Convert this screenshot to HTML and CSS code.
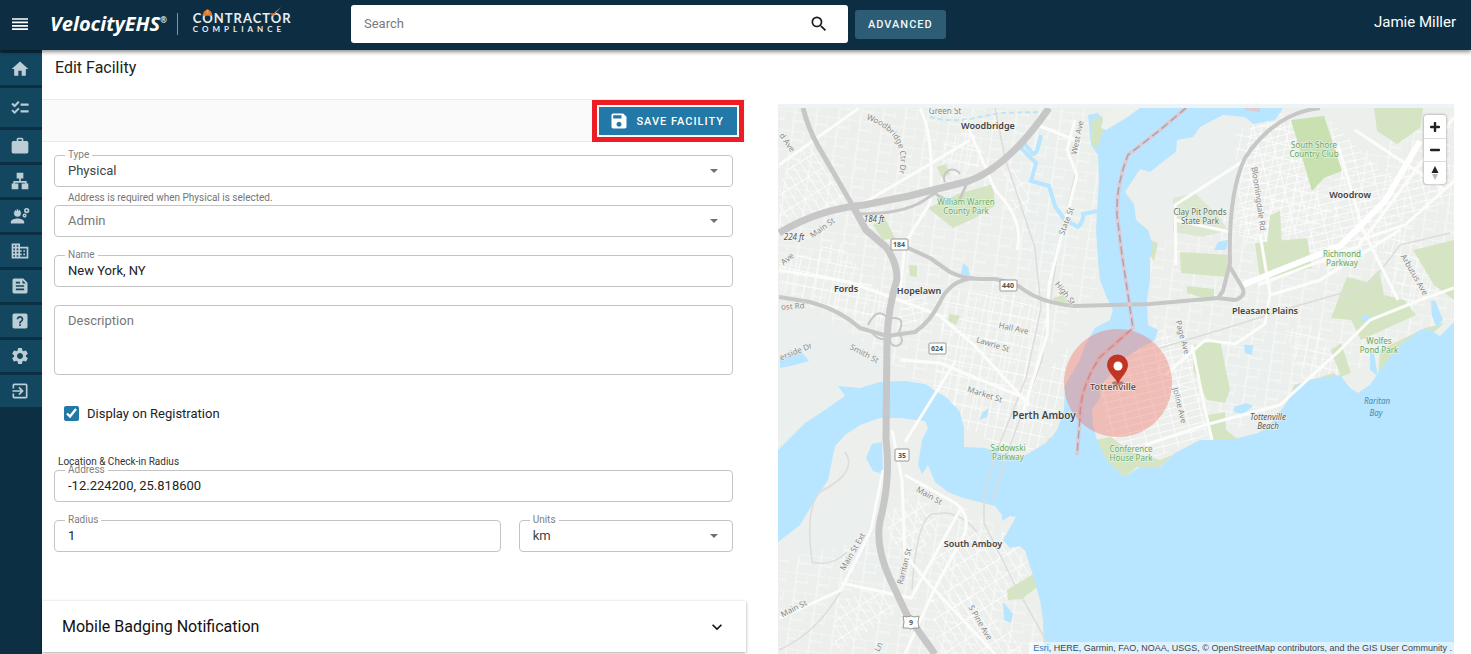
FILE: index.html
```html
<!DOCTYPE html>
<html lang="en">
<head>
<meta charset="utf-8">
<meta name="viewport" content="width=device-width, initial-scale=1">
<title>Edit Facility</title>
<link rel="stylesheet" href="styles.css">
</head>
<body>
<header class="topbar">
  <div class="brand">
    <button class="menu-button" type="button" aria-label="Menu">
      <svg width="16" height="12" viewBox="0 0 16 12"><path d="M0 1h16M0 4.400h16M0 7.800h16M0 11.200h16" stroke="#fff" stroke-width="1.700"/></svg>
    </button>
    <span class="logo">VelocityEHS<sup class="logo-mark">®</sup></span>
    <span class="logo-divider"></span>
    <span class="product">
      <span class="product-name">CONTRACTOR</span>
      <span class="product-sub">COMPLIANCE</span>
      <svg class="product-art" viewBox="0 0 96 24" aria-hidden="true">
        <path d="M10 7.500a4.500 4.500 0 0 1 9 0l1 1.200H9z" fill="#e07b2c"/><path d="M13.500 2.500h2v4h-2z" fill="#f19a4c"/>
        <path d="M77 6l3 3.500L88 0l-7.600 6.500z" fill="#e07b2c"/>
      </svg>
    </span>
  </div>
  <form class="search" role="search">
    <input class="search-input" type="search" placeholder="Search" aria-label="Search">
    <button class="search-button" type="button" aria-label="Search">
      <svg width="20" height="20" viewBox="0 0 24 24"><path fill="#1b1b1b" d="M15.500 14h-.790l-.280-.270A6.470 6.470 0 0 0 16 9.500 6.500 6.500 0 1 0 9.500 16c1.610 0 3.090-.590 4.230-1.570l.270.280v.790l5 4.990L20.490 19zm-6 0C7.010 14 5 11.990 5 9.500S7.010 5 9.500 5 14 7.010 14 9.500 11.990 14 9.500 14"/></svg>
    </button>
  </form>
  <button class="advanced" type="button">ADVANCED</button>
  <span class="user">Jamie Miller</span>
</header>

<div class="shell">
  <nav class="sidebar" aria-label="Main">
    <a class="nav-item" href="#home" aria-label="Home"><svg viewBox="0 0 24 24"><path d="M10 20v-6h4v6h5v-8h3L12 3 2 12h3v8z"/></svg></a>
    <a class="nav-item nav-item-tall" href="#tasks" aria-label="Tasks"><svg viewBox="0 0 24 24"><path d="M22 7h-9v2h9zm0 8h-9v2h9zM5.540 11 2 7.460l1.410-1.410 2.120 2.120 4.240-4.240 1.410 1.410zm0 8L2 15.460l1.410-1.410 2.120 2.120 4.240-4.240 1.410 1.410z" stroke="#bccdd6" stroke-width=".6"/></svg></a>
    <a class="nav-item" href="#work" aria-label="Work"><svg viewBox="0 0 24 24"><path d="M20 6h-4V4c0-1.110-.890-2-2-2h-4c-1.110 0-2 .890-2 2v2H4c-1.110 0-2 .890-2 2v11c0 1.110.890 2 2 2h16c1.110 0 2-.890 2-2V8c0-1.110-.890-2-2-2m-6 0h-4V4h4z"/></svg></a>
    <a class="nav-item" href="#structure" aria-label="Structure"><svg viewBox="0 0 24 24"><path d="M8 2h8v7h-3v3h7v3h2v7h-8v-7h4v-1H6v1h4v7H2v-7h2v-3h7V9H8z"/></svg></a>
    <a class="nav-item" href="#workers" aria-label="Workers"><svg viewBox="0 0 24 24"><path d="M9 15c-2.670 0-8 1.340-8 4v2h16v-2c0-2.660-5.330-4-8-4M4.740 9H5a4 4 0 0 0 8 0h.260c.270 0 .490-.220.490-.490v-.020c0-.270-.220-.490-.490-.490H13c0-1.480-.810-2.750-2-3.450v.950a.5.5 0 0 1-1 0V4.140a4 4 0 0 0-2 0V5.500a.5.5 0 0 1-1 0v-.950A3.980 3.980 0 0 0 5 8h-.260c-.270 0-.490.220-.490.490v.030c0 .260.220.480.490.480"/><circle cx="20" cy="5.500" r="2.200" fill="none" stroke="#bccdd6" stroke-width="2"/><circle cx="17.500" cy="11.500" r="1.600" fill="none" stroke="#bccdd6" stroke-width="1.700"/></svg></a>
    <a class="nav-item" href="#facilities" aria-label="Facilities"><svg viewBox="0 0 24 24"><path d="M12 7V3H2v18h20V7zM6 19H4v-2h2zm0-4H4v-2h2zm0-4H4V9h2zm0-4H4V5h2zm4 12H8v-2h2zm0-4H8v-2h2zm0-4H8V9h2zm0-4H8V5h2zm10 12h-8v-2h2v-2h-2v-2h2v-2h-2V9h8zm-2-8h-2v2h2zm0 4h-2v2h2z"/></svg></a>
    <a class="nav-item" href="#documents" aria-label="Documents"><svg viewBox="0 0 24 24"><path d="M16 3H5c-1.100 0-2 .9-2 2v14c0 1.100.9 2 2 2h14c1.100 0 2-.9 2-2V8zM7 7h5v2H7zm10 10H7v-2h10zm0-4H7v-2h10zm-2-4V5l4 4z"/></svg></a>
    <a class="nav-item" href="#help" aria-label="Help"><svg viewBox="0 0 24 24"><path d="M19 3H5c-1.100 0-2 .9-2 2v14c0 1.100.9 2 2 2h14c1.100 0 2-.9 2-2V5c0-1.100-.9-2-2-2m-6 15h-2v-2h2zm0-3h-2c0-3.250 3-3 3-5 0-1.100-.9-2-2-2s-2 .9-2 2H8c0-2.210 1.790-4 4-4s4 1.790 4 4c0 2.500-3 2.750-3 5"/></svg></a>
    <a class="nav-item" href="#settings" aria-label="Settings"><svg viewBox="0 0 24 24"><path d="M19.140 12.940c.040-.3.060-.610.060-.940s-.020-.640-.070-.940l2.030-1.580c.180-.140.230-.410.120-.610l-1.920-3.320c-.120-.220-.370-.290-.590-.220l-2.390.960c-.5-.380-1.030-.7-1.620-.940L14.400 2.810c-.040-.240-.240-.410-.480-.410h-3.840c-.240 0-.430.170-.470.410l-.360 2.540c-.590.240-1.130.570-1.620.940l-2.390-.960c-.220-.080-.470 0-.590.220L2.740 8.870c-.120.210-.080.470.120.610l2.030 1.580c-.050.3-.090.630-.090.940s.020.640.070.940l-2.030 1.580c-.180.140-.230.410-.120.610l1.920 3.320c.120.220.370.290.590.220l2.390-.960c.5.380 1.030.7 1.620.940l.360 2.540c.050.240.240.410.480.410h3.840c.240 0 .440-.170.470-.410l.360-2.540c.590-.240 1.130-.560 1.620-.940l2.390.960c.220.080.470 0 .590-.220l1.920-3.320c.120-.220.070-.470-.120-.610zM12 15.600c-1.980 0-3.600-1.620-3.600-3.600s1.620-3.600 3.600-3.600 3.600 1.620 3.600 3.600-1.620 3.600-3.600 3.600"/></svg></a>
    <a class="nav-item" href="#exit" aria-label="Sign out"><svg viewBox="0 0 24 24"><path d="M10.090 15.590 11.500 17l5-5-5-5-1.410 1.410L12.670 11H3v2h9.670zM19 3H5a2 2 0 0 0-2 2v4h2V5h14v14H5v-4H3v4a2 2 0 0 0 2 2h14c1.100 0 2-.9 2-2V5c0-1.100-.9-2-2-2"/></svg></a>
  </nav>

  <main class="content">
    <h1 class="page-title">Edit Facility</h1>
    <div class="columns">
      <section class="editor">
        <div class="toolbar">
          <div class="highlight">
            <button class="save" type="submit" form="facility">
              <svg width="20" height="20" viewBox="0 0 24 24"><path fill="#fff" d="M17 3H5a2 2 0 0 0-2 2v14a2 2 0 0 0 2 2h14c1.100 0 2-.9 2-2V7zm-5 16c-1.660 0-3-1.340-3-3s1.340-3 3-3 3 1.340 3 3-1.340 3-3 3m3-10H5V5h10z"/></svg>
              SAVE FACILITY
            </button>
          </div>
        </div>
        <form class="form" id="facility">
          <div class="field field-select">
            <select class="control" id="type"><option>Physical</option></select>
            <label class="label" for="type">Type</label>
            <span class="hint">Address is required when Physical is selected.</span>
          </div>
          <div class="field field-select">
            <select class="control control-empty" aria-label="Admin"><option>Admin</option></select>
          </div>
          <div class="field">
            <input class="control" id="name" type="text" value="New York, NY">
            <label class="label" for="name">Name</label>
          </div>
          <div class="field">
            <textarea class="control control-area" placeholder="Description" aria-label="Description"></textarea>
          </div>
          <label class="check"><input class="check-box" type="checkbox" checked>Display on Registration</label>
          <p class="group-title">Location &amp; Check-in Radius</p>
          <div class="field">
            <input class="control" id="address" type="text" value="-12.224200, 25.818600">
            <label class="label label-clear" for="address">Address</label>
          </div>
          <div class="field-row">
            <div class="field">
              <input class="control" id="radius" type="text" value="1">
              <label class="label" for="radius">Radius</label>
            </div>
            <div class="field field-select">
              <select class="control" id="units"><option>km</option></select>
              <label class="label" for="units">Units</label>
            </div>
          </div>
        </form>
        <button class="accordion" type="button">Mobile Badging Notification
          <svg width="20" height="20" viewBox="0 0 24 24"><path fill="#111" d="M7.410 8.580 12 13.170l4.590-4.590L18 10l-6 6-6-6z"/></svg>
        </button>
      </section>

      <section class="map" aria-label="Facility map">
        <svg class="map-canvas" viewBox="778 108 676 546" preserveAspectRatio="xMidYMid slice">
          <defs>
            <pattern id="g1" width="9" height="14" patternUnits="userSpaceOnUse" patternTransform="rotate(12)"><path d="M0 0h9M0 0v14" stroke="#fff" stroke-width="1.300" fill="none"/></pattern>
            <pattern id="g2" width="15" height="7" patternUnits="userSpaceOnUse" patternTransform="rotate(-14)"><path d="M0 0h15M0 0v7" stroke="#fff" stroke-width="1.400" fill="none"/></pattern>
            <pattern id="g3" width="8" height="17" patternUnits="userSpaceOnUse" patternTransform="rotate(-32)"><path d="M0 0h8M0 0v17" stroke="#fff" stroke-width="1.300" fill="none"/></pattern>
            <pattern id="g4" width="22" height="19" patternUnits="userSpaceOnUse" patternTransform="rotate(8)"><path d="M0 0h22M0 0v12M11 0v19M11 9h11" stroke="#fafbf9" stroke-width="1" fill="none"/></pattern>
          </defs>
          <rect x="778" y="108" width="676" height="546" fill="#ecefec"/>
          <g fill="#ebf0ee">
            <path d="M1016 125l26-8 20 40 8 100-25 20-28-20z"/><path d="M779 310l60 15 45 20-3 38-40 15-62 50z"/><path d="M1128 195l50-55 70-20 8 20-22 60-1 40-80-20z"/><path d="M1218 340l60-15 10 60-30 40-34 12z"/><path d="M790 530l90-70-5 80 10 40-95-10z"/>
          </g>

          <g fill="url(#g4)">
            <path d="M778 108h320v180l-50 60-20 80-90-30-80-60-80-50z"/><path d="M1150 250l305-140v210l-160 80-60 30-80-60z"/><path d="M779 560l90-20 50-60 100 60 25 114H779z"/>
          </g>
          <path d="M940 145l30-18 20 35-35 14zM870 285l20 8-2 30-50-10-58-22v-30l60-20z" fill="url(#g1)"/>
          <path d="M779 180l30-35 40 60-30 8-40 18zM1000 165l22 8 12 40-20-6z" fill="url(#g3)"/>
          <path d="M935 290l80 5 35 20-12 85-30 50-80-40 15-70zM1020 405l50-60-6 60-26 45-40 4z" fill="url(#g1)"/>
          <path d="M910 290l20 10-15 28-20-3z" fill="url(#g2)"/>
          <path d="M1250 120l40-8 25 80 80-20-10 70-50 30-70-20-30-30zM1330 120l60 60 60-40v60l-70 30-45-20z" fill="url(#g2)"/>
          <path d="M1235 130l60-12 20 80 25 20-100 30z" fill="url(#g1)"/>
          <path d="M1100 385l55-60 35 20 18 90-30 12-40 20-30-25z" fill="url(#g2)"/>
          <path d="M1285 330l30-5 20 30 3 20-35 5zM1380 240l30-15 30 65-35 15z" fill="url(#g1)"/>
          <path d="M930 560l40-30 55 20 7 25-30 30-40 30z" fill="url(#g3)"/>
          <path d="M835 600l50-10 15 20-65 44zM885 510l40-10 15 25-25 35-25-20zM930 600l40-10 60 64h-90z" fill="url(#g3)"/>

          <g fill="#d5e5c3">
            <path d="M1374 108h49l-3 20-23 16-20-13z"/><path d="M1291 120l33-4 18 55-18 7-12 13z" fill="#c9e1b1"/>
            <path d="M928 208l30-14 35-10 2 22-20 12-22 10z"/><path d="M937 167l9-3 4 10-8 4z"/><path d="M873 225l12-7 10 20-12 2z"/>
            <path d="M1173 198l22-5 25 25 8 12-25 7-30-5z" fill="#dde8d3"/><path d="M1180 252l50 3-5 22-44-4z"/><path d="M1187 286l27 3v12l-27-8z"/><path d="M1255 243l52-5 5 30-52 12z"/><path d="M1270 215l10-4 2 35-15-2z"/>
            <path d="M1347 277l20 5 12-12 5 25 20 5 12 15-55 25-10-20-20-2z"/><path d="M1413 250l41-10v60l-20-15z"/><path d="M1194 345l26-5 10 50-5 13-18-3-14-30z"/><path d="M1208 415l17-3 1 18 13 10-28 2z"/><path d="M1095 440l16-3 20 15 29 8 15-6-16 13-22 0-12 10-14-10z"/>
            <path d="M1294 385l40-12 8 8-30 3-20 8z"/><path d="M1331 350l10-7 10 30-10 4z"/><path d="M1380 350l45-22 20-5-15 12-40 30-12 15z"/><path d="M1007 590l28-17 2 14-15 12-14 1z"/><path d="M909 265l8 1v11l-7-1z"/><path d="M949 314l11 2-4 9-8-4z"/><path d="M1053 298l10-3 6 8-15-1z"/><path d="M1150 240l8 3-4 18-6-8z"/><path d="M1030 452l16-8 3-6 4-1-3 8-15 10z"/>
          </g>

          <g fill="#b8e5ff">
            <path d="M1088 115L1098 113 1107 125 1130 113 1140 108 1283 108 1275 120 1253 124 1245 117 1223 115 1200 127 1193 137 1177 140 1176 152 1165 160 1150 172 1140 169 1125 192 1134 204 1136 220 1148 230 1153 246 1150 258 1150 280 1147 300 1148 325 1158 330 1155 340 1140 348 1125 358 1115 370 1101 385 1100 398 1092 410 1093 425 1097 440 1104 455 1113 467 1125 477 1132 472 1140 467 1160 467 1175 453 1200 440 1230 440 1258 433 1268 427 1285 405 1297 385 1310 380 1340 375 1350 388 1358 393 1370 385 1380 370 1400 345 1420 330 1430 330 1440 336 1454 322 1454 654 1044 654 1043 620 1040 600 1033 575 1025 551 1020 546 1010 548 1003 540 1016 517 1010 516 1002 521 1002 515 995 506 980 502 963 498 948 492 935 482 928 465 922 474 918 465 922 440 928 428 925 421 900 418 880 418 860 425 845 435 835 446 828 480 815 500 800 525 778 542 778 450 790 438 805 423 825 410 845 396 838 386 860 388 880 382 905 381 925 384 947 398 960 412 964 428 964 447 985 448 1000 453 1020 458 1035 450 1050 440 1057 430 1064 410 1065 385 1080 360 1085 345 1095 328 1110 320 1113 310 1107 298 1100 280 1098 260 1096 230 1099 180 1098 155 1091 145z"/>
            <path d="M872 444l10-2 1 32-10-3-7-13z"/><path d="M963 263l5 4 2 9-9-2z"/><path d="M983 412l6-4-2 9-8 3z"/><path d="M780 356l20-6 9 11-14 4-15 3zM1003 602l10 12-2 9-7-3z"/><path d="M1244 345h9l-1 10-7-2zM1234 407l12-4 7 3-10 8-9-2zM1431 301l4-1 8 20-6 8-5-12zM1370 350l4 4 4 22-8-6zM1218 242l10-2-2 10-12 0zM1361 315l8 1 3 5-9 1z"/>
          </g>
          <path d="M1092 120l10-4 2 14-8 20-5-10z" fill="#d5e5c3"/>
          <path d="M1112 108h28l-14 10-20 12-5-2 3-12z" fill="#eef1ec"/>
          <path d="M1041 135q-4 20-8 19l-9-11-3 5 15 15-5 18 18 5 6 20 9 13 14 8q6-6 5-13l14-3" fill="none" stroke="#b8e5ff" stroke-width="4"/>
          <path d="M930 117q20 5 40 2l30-6 40-1" fill="none" stroke="#bde5f3" stroke-width="2" stroke-dasharray="5 3"/>

          <g fill="none" stroke="#dedcda" stroke-width="1.500">
            <path d="M995 108l10 50 30 90 6 60-15 70-30 75-12 40v30l30 60 40 72"/><path d="M1075 175l-18 80-15 105-30 80-20 60"/><path d="M1160 348l60-18 80-25 70-20 30-40 50-12"/><path d="M845 452q14 20-25 40-15 15-8 70 20 5 35-10M779 650q45-20 70-75M912 590q5-80 25-76 20-5 40 18"/>
          </g>
          <g fill="none" stroke="#fcfdfb" stroke-width="3">
            <path d="M920 108q15 30 10 95l-25 40-5 50"/><path d="M779 165l80-57M860 205l60-35 50-30"/><path d="M965 120l30 70q30 30 22 60M1040 126l35 14M1075 120l-8 30 10 25-28 110-2 50-25 80"/><path d="M779 270l70 12 50 18 40 15 35 30 55 60M900 360l40 3 85 35M955 362l-50 80"/><path d="M892 430l10 50 3 75 25 30 65 69M883 470l-12 60-30 60-61 28"/><path d="M905 475l50 28q15 10 10 30l-30 55-30 66"/><path d="M841 583l70 15 50-90"/><path d="M1145 445l60-20 75-20 60-55 30-30 50-20 34-12"/><path d="M1165 375l40-35 30 4 30-20 5-30-10-60M1258 285l100-38 60-80 36-50M1355 130l90 60M1360 240l45-15 50-45M1245 160l-70 45 1 60M1338 145l25 85 35 70"/><path d="M1192 345l12 60 8 35M1175 220l55 12M1270 295l50-15 80-50"/>
          </g>
          <path d="M1240 286l100-40 45-45 35-60" fill="none" stroke="#fff" stroke-width="6"/>
          <g fill="none" stroke="#c6c7c6" stroke-width="4" stroke-linejoin="round">
            <path d="M803 108q5 20 15 38l36 62" stroke-width="5"/>
            <path d="M854 208l12 22 20 17q11 15 11 32-9 30-10 60l-1 100q5 40-6 82-5 25 10 58l17 36 28 39" stroke-width="7"/>
            <path d="M779 233q40-24 85-28l45-9 60-15q40-15 80-73" stroke-width="7"/>
            <path d="M858 214q45 0 65-13l12-8q8 8 24 8l8-18" stroke-width="3"/>
            <path d="M908 248l22 10 20 14q14 7 30 7l15 0q16 3 25 8 20 16 55 19l75-2 68-6"/>
            <path d="M779 297l31 5q30 8 50 26l27 8 28-4q15-10 25-30 10-22 34-24"/>
            <path d="M1320 108q-45 5-75 50-17 35-15 105l-7 28-5 7 17 2q12-4 7-13l-12-20" stroke-width="4"/>
            <path d="M868 325q10-20 20-6 20-5 10 15M870 330q10 15 22 5m-2 5a6 6 0 1 0 12 0 6 6 0 1 0-12 0M945 182a8 8 0 0 1 15-8" stroke-width="2"/>
          </g>
          <path d="M1186 108l-26 22-32 25q-12 30-11 60l5 40 11 73-33 29q-20 30-20 60l-3 38M1245 108l15 2" fill="none" stroke="#dccbd5" stroke-width="4"/>
          <path d="M1186 108l-26 22-32 25q-12 30-11 60l5 40 11 73-33 29q-20 30-20 60l-3 38" fill="none" stroke="#aba3b0" stroke-width="1.500" stroke-dasharray="8 4"/>
          <circle cx="1118" cy="383" r="54" fill="#f26b5e" fill-opacity=".38"/>

          <g class="town">
            <text x="988" y="129">Woodbridge</text><text x="1350" y="198">Woodrow</text><text x="846" y="292">Fords</text><text x="919" y="294">Hopelawn</text><text x="1265" y="314">Pleasant Plains</text><text x="973" y="547">South Amboy</text>
            <text class="city" x="1044" y="419">Perth Amboy</text><text x="1113" y="390" fill="#7a4a4a">Tottenville</text>
          </g>
          <g class="park">
            <text x="966" y="205">William Warren</text><text x="966" y="214">County Park</text><text x="1314" y="148">South Shore</text><text x="1314" y="157">Country Club</text><text x="1342" y="257">Richmond</text><text x="1342" y="266">Parkway</text><text x="1379" y="344">Wolfes</text><text x="1379" y="353">Pond Park</text><text x="1008" y="451">Sadowski</text><text x="1008" y="460">Parkway</text><text x="1131" y="452">Conference</text><text x="1131" y="461">House Park</text>
            <g fill="#5c7159"><text x="1200" y="215">Clay Pit Ponds</text><text x="1200" y="224">State Park</text></g>
          </g>
          <g class="place"><text x="1268" y="420">Tottenville</text><text x="1268" y="429">Beach</text><text x="874" y="222">184 ft</text><text x="794" y="240">224 ft</text></g>
          <g class="bay"><text x="1377" y="404">Raritan</text><text x="1376" y="416">Bay</text></g>
          <defs>
            <path id="ctr" d="M866 119q42 15 33 54"/>
          </defs>
          <g class="street">
            <text class="street-path"><textPath href="#ctr">Woodbridge Ctr Dr</textPath></text>
            <text transform="translate(945 114)">Green St</text><text transform="translate(785 144) rotate(55)">d Ave</text><text transform="translate(824 230) rotate(-36)">Main St</text><text transform="translate(789 261) rotate(-38)">Ave</text><text transform="translate(1080 138) rotate(-78)">West Ave</text><text transform="translate(1069 222) rotate(-70)">State St</text><text transform="translate(793 309) rotate(-4)">ost Rd</text><text transform="translate(797 354) rotate(-22)">erside Dr</text><text transform="translate(863 356) rotate(28)">Smith St</text><text transform="translate(1013 331) rotate(12)">Hall Ave</text><text transform="translate(992 347) rotate(17)">Lawrie St</text><text transform="translate(984 397) rotate(18)">Market St</text><text transform="translate(1063 295) rotate(52)">High St</text><text transform="translate(1180 338) rotate(75)">Page Ave</text><text transform="translate(1177 406) rotate(76)">Joline Ave</text><text transform="translate(1256 199) rotate(82)">Bloomingdale Rd</text><text transform="translate(1412 276) rotate(60)">Arbutus Ave</text><text transform="translate(928 498) rotate(30)">Main St</text><text transform="translate(855 553) rotate(-60)">Main St Ext</text><text transform="translate(907 567) rotate(-76)">Raritan St</text><text transform="translate(795 611) rotate(-27)">Main St</text><text transform="translate(978 624) rotate(60)">S Pine Ave</text><text transform="translate(881 648) rotate(-65)">Ln</text>
          </g>
          <g class="shield">
            <rect x="891" y="239" width="17" height="11" rx="1"/><text x="899" y="247">184</text><rect x="1000" y="280" width="17" height="11" rx="1"/><text x="1008" y="288">440</text><rect x="929" y="343" width="17" height="11" rx="1"/><text x="937" y="351">624</text><rect x="895" y="449" width="14" height="12" rx="1"/><text x="902" y="458">35</text><path d="M903 616l4 1 4-1 4 1 4-1-1 6 1 6h-5l-3 1-3-1h-5l1-6z"/><text x="911" y="625">9</text>
          </g>
          <ellipse cx="1118" cy="383" rx="6" ry="2" fill="#6b2a22" opacity=".45"/>
          <path d="M1118 384c-2-6-11-12-11-19a10.500 10.500 0 0 1 21 0c0 7-8 13-10 19z" fill="#c23523"/><circle cx="1118" cy="366" r="4.500" fill="#fff"/>
        </svg>
        <div class="map-controls">
          <button class="map-button" type="button" aria-label="Zoom in"><svg width="10" height="10" viewBox="0 0 10 10"><path d="M5 1v8M1 5h8" stroke="#222" stroke-width="2.400" stroke-linecap="round"/></svg></button>
          <button class="map-button" type="button" aria-label="Zoom out"><svg width="10" height="10" viewBox="0 0 10 10"><path d="M1 5h8" stroke="#222" stroke-width="2.400" stroke-linecap="round"/></svg></button>
          <button class="map-button" type="button" aria-label="Reset north"><svg width="10" height="14" viewBox="0 0 10 14"><path d="M5 0l3.500 7h-7z" fill="#222"/><path d="M5 14l3-6H2z" fill="#bbb"/></svg></button>
        </div>
        <div class="attribution"><a class="attribution-link" href="#esri">Esri</a>, HERE, Garmin, FAO, NOAA, USGS, © OpenStreetMap contributors, and the GIS User Community .</div>
      </section>
    </div>
  </main>
</div>
</body>
</html>
```
FILE: styles.css
```css
* { box-sizing: border-box; }

body {
  margin: 0;
  min-height: 100vh;
  display: flex;
  flex-direction: column;
  background: #fff;
  color: #222;
  font-family: Roboto, "Liberation Sans", sans-serif;
  font-size: 13px;
}

button, input, select, textarea { font: inherit; }
button { border: 0; padding: 0; cursor: pointer; }

/* Top bar */
.topbar {
  display: flex;
  align-items: center;
  height: 50px;
  padding: 0 15px 2px 0;
  background: #0d2e42;
  box-shadow: 0 2px 4px rgba(0, 0, 0, .45);
  z-index: 2;
}
.brand { display: flex; align-items: center; width: 351px; height: 100%; }
.menu-button { display: flex; padding: 0 12px; background: none; }
.logo {
  margin-left: 10px;
  color: #fff;
  font: italic 700 20px/28px "Open Sans", sans-serif;
  white-space: nowrap;
}
.logo-mark { font-size: 8px; line-height: 8px; vertical-align: 8px; }
.logo-divider { width: 1px; height: 22px; margin: 0 15px 0 10px; background: #8296a1; }
.product { position: relative; display: flex; flex-direction: column; padding-bottom: 4px; color: #e8edf0; }
.product-name { font: 700 13px/14px Lato, sans-serif; letter-spacing: 1px; }
.product-sub { font: 700 8px/9px Lato, sans-serif; letter-spacing: 4px; }
.product-art { position: absolute; left: 0; top: -4px; width: 96px; height: 24px; }

.search {
  display: flex;
  flex: 0 1 497px;
  height: 38px;
  background: #fff;
  border-radius: 3px;
}
.search-input { flex: 1; min-width: 0; padding: 0 13px 2px; border: 0; background: none; color: #333; outline: 0; }
.search-input::placeholder { color: #7b7b7b; }
.search-button { display: flex; align-items: center; padding: 0 19px; background: none; }
.advanced {
  height: 29px;
  margin-left: 7px;
  padding: 0 13px;
  border-radius: 3px;
  background: #2d5c75;
  color: #f2f6f8;
  font-size: 11px;
  font-weight: 500;
  letter-spacing: 1px;
}
.user { margin-left: auto; padding-bottom: 4px; color: #fff; font-size: 15px; }

/* Shell */
.shell { display: flex; flex: 1; }
.sidebar {
  display: flex;
  flex-direction: column;
  gap: 3px;
  flex: 0 0 42px;
  padding-top: 3px;
  background: #0c2f43;
}
.nav-item {
  display: flex;
  align-items: center;
  justify-content: center;
  height: 32px;
  padding-right: 3px;
  background: #13475f;
}
.nav-item-tall { height: 39px; }
.nav-item svg { width: 20px; height: 20px; fill: #bccdd6; }

.content { display: flex; flex-direction: column; flex: 1; min-width: 0; }
.page-title { margin: 0; padding: 8px 13px 21px; font-size: 16px; font-weight: 400; line-height: 20px; }
.columns { display: grid; grid-template-columns: 704fr 676fr; gap: 32px; flex: 1; padding-right: 17px; }

/* Editor */
.toolbar {
  display: flex;
  justify-content: flex-end;
  padding-right: 2px;
  background: #fafafa;
  border-top: 1px solid #ebebeb;
  box-shadow: inset 0 -1px #ebebeb;
}
.highlight { display: flex; padding: 2px; border: 5px solid #ee1c24; background: #fff; }
.save {
  display: flex;
  align-items: center;
  gap: 7px;
  height: 28px;
  padding: 0 13px 0 10px;
  background: #2278a6;
  color: #fff;
  font-size: 11px;
  font-weight: 500;
  letter-spacing: 1px;
}
.form { display: flex; flex-direction: column; gap: 18px; padding: 13px 13px 49px 12px; }
.field { position: relative; min-width: 0; }
.control {
  display: block;
  width: 100%;
  height: 32px;
  padding: 0 13px 2px;
  border: 1px solid #c4c4c4;
  border-radius: 4px;
  background: #fff;
  color: #222;
  outline: 0;
  appearance: none;
}
select.control { color: #444; }
select.control-empty { color: #777; }
.control-area { height: 70px; padding-top: 7px; resize: none; }
.control::placeholder { color: #777; }
.field-select::after {
  content: "";
  position: absolute;
  right: 15px;
  top: 14px;
  border: 4px solid transparent;
  border-top-color: #707070;
}
.label {
  position: absolute;
  left: 11px;
  top: -6px;
  padding: 0 3px;
  background: #fff;
  color: #808080;
  font-size: 10px;
  line-height: 12px;
}
.label-clear { background: linear-gradient(transparent 5px, #fff 5px); }
.hint { position: absolute; left: 14px; top: 37px; color: #757575; font-size: 10px; line-height: 12px; white-space: nowrap; }
.check { display: flex; align-items: center; gap: 8px; margin-top: 13px; padding-left: 10px; line-height: 15px; }
.check-box { width: 15px; height: 15px; margin: 0; accent-color: #2278a6; }
.group-title { margin: 17px 0 -16px; padding-left: 4px; font-size: 10px; line-height: 12px; color: #333; }
.field-row { display: grid; grid-template-columns: 446fr 214fr; gap: 18px; }
.accordion {
  display: flex;
  align-items: center;
  justify-content: space-between;
  width: 100%;
  height: 51px;
  padding: 0 19px 0 20px;
  background: #fff;
  box-shadow: 0 1px 3px rgba(0, 0, 0, .35);
  color: #111;
  font-size: 16px;
}

/* Map */
.map { position: relative; margin-top: 5px; border-top: 4px solid #eef3f7; overflow: hidden; }
.map-canvas { position: absolute; inset: 0; width: 100%; height: 100%; }
.map-canvas text { text-anchor: middle; font-family: "Noto Sans", sans-serif; paint-order: stroke; stroke: #f4f6f3; stroke-width: 1px; }
.town { fill: #444; font-size: 9px; font-weight: 600; }
.city { font-size: 10px; }
.park { fill: #62aa58; font-size: 8px; }
.place { fill: #555; font-size: 8px; font-style: italic; }
.bay { fill: #4b8ba8; font-size: 8px; font-style: italic; }
.map-canvas .bay text { stroke: none; }
.street { fill: #888; font-size: 8px; }
.map-canvas .street-path { text-anchor: start; }
.shield { fill: #fff; stroke: #999; }
.map-canvas .shield text { fill: #555; stroke: none; font-size: 7px; font-weight: 700; }
.map-controls {
  position: absolute;
  right: 8px;
  top: 7px;
  display: flex;
  flex-direction: column;
  width: 22px;
  border-radius: 3px;
  background: #fff;
  box-shadow: 0 0 2px 1px rgba(0, 0, 0, .2);
}
.map-button { display: flex; align-items: center; justify-content: center; height: 23px; background: none; }
.map-button + .map-button { border-top: 1px solid #ddd; }
.attribution {
  position: absolute;
  right: 0;
  bottom: 0;
  padding: 0 2px 0 4px;
  background: rgba(255, 255, 255, .5);
  color: #444;
  font: 9px/12px "Liberation Sans", Arial, sans-serif;
  white-space: nowrap;
}
.attribution-link { color: #2878b8; text-decoration: none; }
```
